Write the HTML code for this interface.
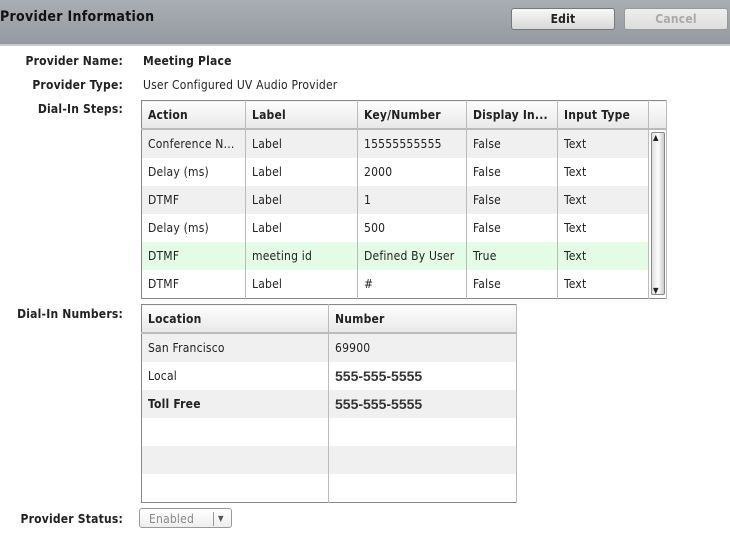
<!DOCTYPE html>
<html><head><style>
body{margin:0;width:730px;height:533px;background:#fff;font-family:"DejaVu Sans Condensed","Liberation Sans",sans-serif;font-size:12px;letter-spacing:0.2px;color:#222;position:relative;overflow:hidden}
.hdr{position:absolute;left:0;top:0;width:730px;height:44px;background:linear-gradient(#a9aeb3,#959aa0);border-bottom:2px solid #c8cbce}
.hdr .t{position:absolute;left:0;top:9px;font-weight:bold;font-size:14px;letter-spacing:0.3px;color:#111}
.btn{position:absolute;top:8px;width:102px;height:20px;border:1px solid #777;border-radius:3px;background:linear-gradient(#f8f8f8,#d8d8d8);text-align:center;line-height:20px;font-weight:bold;font-size:12px}
.lbl{position:absolute;right:607px;font-weight:bold;font-size:12px;white-space:nowrap}
.val{position:absolute;left:143px;font-size:12px}
table{position:absolute;border-collapse:collapse;border:1px solid #888;table-layout:fixed}
td,th{height:28px;padding:0 0 0 6px;text-align:left;border-right:1px solid #bbb;font-size:12px;white-space:nowrap;overflow:hidden}
th{height:27px;background:linear-gradient(#fdfdfd,#e8e8e8);border-bottom:2px solid #bbb;font-weight:bold}
tr.g td{background:#f0f0f0}
tr.h td{background:#e4fbe6}
.big{font-family:"Liberation Sans",sans-serif;font-weight:bold;font-size:14px;color:#333;letter-spacing:0}
</style></head><body>
<div class="hdr"><div class="t">Provider Information</div>
<div class="btn" style="left:511px">Edit</div>
<div class="btn" style="left:624px;color:#aaa;border-color:#999;background:linear-gradient(#eee,#ddd)">Cancel</div></div>
<div class="lbl" style="top:54px">Provider Name:</div><div class="val" style="top:54px;font-weight:bold">Meeting Place</div>
<div class="lbl" style="top:78px">Provider Type:</div><div class="val" style="top:78px">User Configured UV Audio Provider</div>
<div class="lbl" style="top:102px">Dial-In Steps:</div>
<table style="left:141px;top:100px;width:525px">
<colgroup><col style="width:104px"><col style="width:112px"><col style="width:109px"><col style="width:91px"><col style="width:91px"><col style="width:18px"></colgroup>
<tr><th>Action</th><th>Label</th><th>Key/Number</th><th>Display In...</th><th>Input Type</th><th style="padding:0"></th></tr>
<tr class="g"><td>Conference N...</td><td>Label</td><td>15555555555</td><td>False</td><td>Text</td><td rowspan="6" style="padding:0;background:#fff;vertical-align:top;position:relative"><div style="position:absolute;left:2px;top:2px;width:12px;height:161px;border:1px solid #888;border-radius:2px;background:linear-gradient(90deg,#ddd,#fff,#ccc)"></div><div style="position:absolute;left:4px;top:3px;font-size:8px">▲</div><div style="position:absolute;left:4px;bottom:3px;font-size:8px">▼</div></td></tr>
<tr><td>Delay (ms)</td><td>Label</td><td>2000</td><td>False</td><td>Text</td></tr>
<tr class="g"><td>DTMF</td><td>Label</td><td>1</td><td>False</td><td>Text</td></tr>
<tr><td>Delay (ms)</td><td>Label</td><td>500</td><td>False</td><td>Text</td></tr>
<tr class="h"><td>DTMF</td><td>meeting id</td><td>Defined By User</td><td>True</td><td>Text</td></tr>
<tr><td>DTMF</td><td>Label</td><td>#</td><td>False</td><td>Text</td></tr>
</table>
<div class="lbl" style="top:307px">Dial-In Numbers:</div>
<table style="left:141px;top:304px;width:375px">
<colgroup><col style="width:187px"><col style="width:188px"></colgroup>
<tr><th>Location</th><th>Number</th></tr>
<tr class="g"><td>San Francisco</td><td>69900</td></tr>
<tr><td>Local</td><td class="big">555-555-5555</td></tr>
<tr class="g"><td style="font-weight:bold">Toll Free</td><td class="big">555-555-5555</td></tr>
<tr><td></td><td></td></tr>
<tr class="g"><td></td><td></td></tr>
<tr><td></td><td></td></tr>
</table>
<div class="lbl" style="top:512px">Provider Status:</div>
<div style="position:absolute;left:139px;top:508px;width:93px;height:20px;border:1px solid #999;border-radius:3px;background:linear-gradient(#fff,#eee);color:#888;line-height:20px;padding-left:9px;box-sizing:border-box">Enabled<span style="position:absolute;left:73px;top:3px;height:14px;border-left:1px solid #999"></span><span style="position:absolute;left:78px;font-size:8px;color:#555">▼</span></div>
</body></html>
